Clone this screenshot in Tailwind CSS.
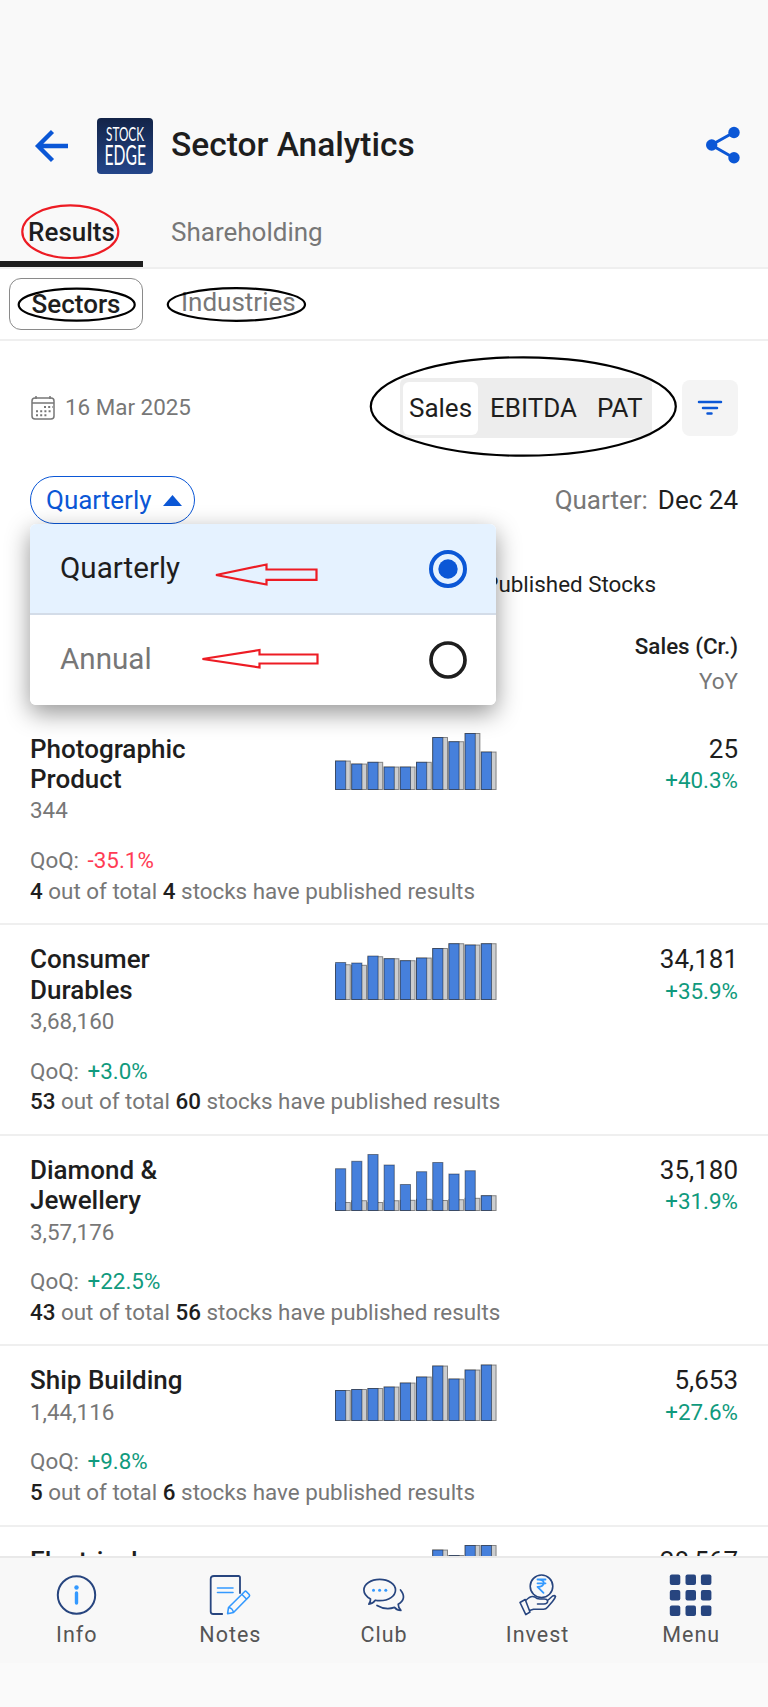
<!DOCTYPE html>
<html lang="en">
<head>
    <meta charset="UTF-8">
    <meta name="viewport" content="width=device-width, initial-scale=1.0">
    <title>Sector Analytics</title>
    <script src="https://cdn.jsdelivr.net/npm/@tailwindcss/browser@4"></script>
</head>
<body class="relative flex flex-col h-[1707px] overflow-hidden bg-white font-['Roboto',sans-serif] text-[#1e1e1e]">
    <!-- Header: back button, logo, title, share -->
    <header class="shrink-0 bg-[#f9f9f9] border-b-2 border-[#efefef] pt-[118px] h-[269px]">
        <div class="flex items-center h-14 pl-[34px] pr-[26px]">
            <svg class="w-9 h-9" viewBox="0 0 36 36" fill="none" stroke="#0b57d6" stroke-width="4.3"><path d="M34 18H5M18.500 3.500L4 18l14.500 14.500"/></svg>
            <svg class="ml-[27px] w-14 h-14" viewBox="0 0 56 56">
                <defs><linearGradient id="logo" x1="0" y1="0" x2="0" y2="1"><stop offset="0" stop-color="#132448"/><stop offset="1" stop-color="#24468a"/></linearGradient></defs>
                <rect width="56" height="56" rx="4" fill="url(#logo)"/>
                <g fill="#fff" font-family="Lato, sans-serif">
                    <text x="9" y="22.500" font-size="19.500" textLength="38" lengthAdjust="spacingAndGlyphs">STOCK</text>
                    <text x="7.500" y="46.500" font-size="27" textLength="41.500" lengthAdjust="spacingAndGlyphs">EDGE</text>
                </g>
            </svg>
            <h1 class="ml-[18px] pb-px text-[33.500px] font-medium">Sector Analytics</h1>
            <svg class="ml-auto mb-[2px] w-9 h-[38px]" viewBox="0 0 36 38" fill="#0b57d6">
                <path d="M27.600 6.500L5.300 19l22.300 12.700" fill="none" stroke="#0b57d6" stroke-width="3"/>
                <circle cx="5.700" cy="19" r="5.700"/><circle cx="28" cy="6.500" r="5.700"/><circle cx="28" cy="31.700" r="5.700"/>
            </svg>
        </div>
        <nav class="flex h-[93px] text-[26px] leading-[117px]">
            <a class="w-[143px] h-[93px] text-center font-medium border-b-[6px] border-[#1e1e1e]">Results</a>
            <a class="ml-7 text-[#777]">Shareholding</a>
        </nav>
    </header>

    <!-- Sub tabs -->
    <div class="shrink-0 flex items-center h-[72px] pl-[9px] border-b-2 border-[#efefef] text-[26px]">
        <a class="w-[134px] h-[52px] leading-[51px] border border-[#8a8a8a] rounded-xl text-center font-medium">Sectors</a>
        <a class="ml-[38px] pb-[3px] text-[#777]">Industries</a>
    </div>

    <main class="flex-1 overflow-hidden">
        <!-- Date, metric switch, filter -->
        <div class="flex items-center pt-[37px] pl-[30px] pr-[30px]">
            <svg class="w-[26px] h-[26px]" viewBox="0 0 26 26" fill="none" stroke="#777" stroke-width="1.500">
                <rect x="2" y="3" width="22" height="21" rx="3"/><path d="M2 8h22M6 1v3M20 1v3"/>
                <path d="M14 12h9M6 16.200h16M6 20.300h12" stroke-width="2" stroke-dasharray="2 2.200"/>
            </svg>
            <span class="ml-[9px] text-[22.400px] text-[#777]">16 Mar 2025</span>
            <div class="ml-auto flex items-center w-[252px] h-[60px] p-[3px] rounded-md bg-[#ededed] text-[26px]">
                <span class="w-[75px] h-[53px] leading-[52px] text-center bg-white rounded-md">Sales</span>
                <span class="ml-[12px] pt-px">EBITDA</span>
                <span class="ml-[20px] pt-px">PAT</span>
            </div>
            <button class="ml-[30px] w-14 h-14 rounded-lg bg-[#f4f4f4]">
                <svg class="w-14 h-14" viewBox="0 0 56 56" fill="none" stroke="#0b57d6" stroke-width="2.500" stroke-linecap="round"><path d="M17 22h22M21 28h14M25.500 33.500h4"/></svg>
            </button>
        </div>

        <!-- Period selector -->
        <div class="relative mt-[38px] flex items-center justify-between h-12 px-[30px] text-[26px]">
            <button class="flex items-center h-12 w-[165px] pl-[15px] border border-[#0b57d6] rounded-full text-[#0b57d6]">Quarterly
                <svg class="ml-[11px] w-[19px] h-[11px]" viewBox="0 0 19 11"><path d="M0 11L9.500 0 19 11z" fill="#0b57d6"/></svg>
            </button>
            <div><span class="text-[#777]">Quarter:</span><span class="ml-[10px]">Dec 24</span></div>
            <!-- Dropdown menu -->
            <div class="absolute z-10 left-[30px] top-12 w-[466px] h-[181px] rounded-md overflow-hidden bg-white text-[29.600px]">
                <div class="flex items-center justify-between h-[91px] px-[30px] bg-[#e5f2ff] border-b-2 border-[#d3dce8]">Quarterly
                    <svg class="-mr-px w-[38px] h-[38px]" viewBox="0 0 38 38"><circle cx="19" cy="19" r="17" fill="none" stroke="#0b57d6" stroke-width="4"/><circle cx="19" cy="19" r="9.700" fill="#0b57d6"/></svg>
                </div>
                <div class="flex items-center justify-between h-[90px] px-[30px] text-[#777]"><span class="pb-px">Annual</span>
                    <svg class="-mr-px w-[38px] h-[38px]" viewBox="0 0 38 38"><circle cx="19" cy="19" r="17" fill="none" stroke="#1e1e1e" stroke-width="3.700"/></svg>
                </div>
            </div>
            <div class="absolute left-[30px] top-12 w-[466px] h-[181px] rounded-md shadow-[0_8px_24px_rgba(0,0,0,0.42)]"></div>
        </div>
        <div class="mt-[45px] h-[30px] leading-[30px] pr-28 text-right text-[22.400px]">Published Stocks</div>
        <div class="mt-[30px] h-[85.500px] pr-[30px] text-right text-[22.400px] leading-[35px]">
            <div class="font-medium">Sales (Cr.)</div>
            <div class="text-[#777]">YoY</div>
        </div>

        <!-- Sector rows, filled by the script below -->
        <div id="rows"></div>
    </main>

    <!-- Bottom navigation -->
    <footer class="relative shrink-0 h-[151px] bg-[#fafafa]">
        <nav class="grid grid-cols-5 h-[107px] pt-[15px] bg-[#f8f8f8] border-t-2 border-[#e9e9e9] text-[21.500px] leading-[33px] tracking-[1px] text-[#555]">
            <a class="flex flex-col items-center">
                <svg class="w-11 h-11" viewBox="0 0 44 44"><circle cx="21.500" cy="22" r="18.700" fill="none" stroke="#27457f" stroke-width="2"/><circle cx="21.500" cy="14.500" r="2.200" fill="#3399ff"/><path d="M21.500 20v10" stroke="#3399ff" stroke-width="3.400" stroke-linecap="round"/></svg>
                <span class="mt-px">Info</span>
            </a>
            <a class="flex flex-col items-center">
                <svg class="w-11 h-11" viewBox="0 0 44 44" fill="none" stroke-width="1.800" stroke-linecap="round" stroke-linejoin="round">
                    <path d="M32 20V4.500Q32 3 30.500 3H6Q2.700 3 2.700 6v32.500q0 2.500 2.500 2.500h9" stroke="#27457f"/>
                    <path d="M9.500 15h15.500M9.500 19.500h15.500M19.600 40.700l.9-6.200L36.500 18.700q1-1 2 0l2.700 2.800q.8 1 0 2L25.500 39.500zM34 21.500l4.700 4.700M20.500 34.500q4 .5 5 5" stroke="#3399ff" stroke-width="1.600"/>
                </svg>
                <span class="mt-px">Notes</span>
            </a>
            <a class="flex flex-col items-center">
                <svg class="w-11 h-11" viewBox="0 0 44 44" fill="none" stroke="#27457f" stroke-width="1.700" stroke-linecap="round" stroke-linejoin="round">
                    <path d="M8.500 26C4.500 23.800 1.900 20.500 1.900 17c0-6 7-10.600 15.800-10.600S33.500 11 33.500 17 26.800 27.700 17.800 27.700q-2.500 0-4.500-.5-2.500 3.500-6.500 4 2-2.500 1.700-5.200z"/>
                    <path d="M38.500 17c4.500 5.500 4 10.500-2.300 14.200q0 3.300 2.700 6.200-4 0-6.400-3-9 3-17.500-2"/>
                    <g fill="#3399ff" stroke="none"><circle cx="11.500" cy="17.300" r="1.500"/><circle cx="17.600" cy="17.300" r="1.500"/><circle cx="23.800" cy="17.300" r="1.500"/></g>
                </svg>
                <span class="mt-px">Club</span>
            </a>
            <a class="flex flex-col items-center">
                <svg class="w-11 h-11" viewBox="0 0 44 44" fill="none" stroke="#27457f" stroke-width="1.600" stroke-linejoin="round" stroke-linecap="round">
                    <circle cx="25.500" cy="13.300" r="11.300"/>
                    <path d="M21.500 6.500h8M21.500 10.300h8M21.500 6.500c8.500-.5 8.500 7.500 0 7.300l6 6" stroke="#3399ff" stroke-width="1.800"/>
                    <path d="M4 29.500l5.200-3L14 39l-4.200 2.600zM9.800 27.500q5-5.500 9-3.500 2 2 5 2h4.500q2.500 0 3.300 1.500l5-4.500q2-1 2.900.5-.5 2-3 5l-5 5.800q-1.500 2-4 2H17.500l-4 1.200M21.500 31h6.500q3.500 0 3.700-3"/>
                </svg>
                <span class="mt-px">Invest</span>
            </a>
            <a class="flex flex-col items-center">
                <svg class="w-11 h-11" viewBox="0 0 44 44" fill="#27457f">
                    <rect x=".8" y="1.500" width="10.500" height="10.500" rx="2"/><rect x="16.500" y="1.500" width="10.500" height="10.500" rx="2"/><rect x="31.900" y="1.500" width="10.500" height="10.500" rx="2"/>
                    <rect x=".8" y="17" width="10.500" height="10.500" rx="2"/><rect x="16.500" y="17" width="10.500" height="10.500" rx="2"/><rect x="31.900" y="17" width="10.500" height="10.500" rx="2"/>
                    <rect x=".8" y="32.500" width="10.500" height="10.500" rx="2"/><rect x="16.500" y="32.500" width="10.500" height="10.500" rx="2"/><rect x="31.900" y="32.500" width="10.500" height="10.500" rx="2"/>
                </svg>
                <span class="mt-px">Menu</span>
            </a>
        </nav>
    </footer>

    <!-- Hand-drawn callouts over the page -->
    <svg class="absolute inset-0 z-20 w-[768px] h-[1707px] pointer-events-none" viewBox="0 0 768 1707" fill="none" stroke="#000" stroke-width="2.200">
        <ellipse cx="70.300" cy="231.700" rx="48" ry="26.300" stroke="#ed1c24"/>
        <ellipse cx="76.700" cy="304.700" rx="58" ry="16"/>
        <ellipse cx="236.400" cy="304.500" rx="68.600" ry="16.300"/>
        <ellipse cx="523.300" cy="406.500" rx="152.500" ry="49.200"/>
        <path d="M216 575l50.500-10.500v5h50v10.300h-50v4.700zM202.500 659l57-9v4.500h58v9h-58v4z" stroke="#ed1c24"/>
    </svg>

    <script>
        // blue = current bars, grey = comparison bars (same as blue when omitted), in px
        const rows = [
            { name: 'Photographic<br>Product', cap: '344', value: '25', yoy: '+40.3%', qoq: '-35.1%', out: 4, total: 4,
              blue: [29, 26, 27.7, 23, 23, 27.7, 52.5, 48.3, 56.5, 38] },
            { name: 'Consumer<br>Durables', cap: '3,68,160', value: '34,181', yoy: '+35.9%', qoq: '+3.0%', out: 53, total: 60,
              blue: [37.5, 37, 44, 41.3, 39.3, 42, 51.5, 56.3, 55, 56.3], grey: [35.3, 34.7, 43.3, 41.3, 39.3, 42, 51.5, 56.3, 55, 56.3] },
            { name: 'Diamond &amp;<br>Jewellery', cap: '3,57,176', value: '35,180', yoy: '+31.9%', qoq: '+22.5%', out: 43, total: 56,
              blue: [42.3, 49.7, 56.5, 46, 26.5, 39.3, 48.5, 37, 40.3, 15.3], grey: [8.5, 10.3, 8.5, 10.3, 10.7, 11.7, 10.5, 11.3, 12.7, 15.3] },
            { name: 'Ship Building', cap: '1,44,116', value: '5,653', yoy: '+27.6%', qoq: '+9.8%', out: 5, total: 6,
              blue: [30.5, 31.5, 32.5, 34, 38, 44, 55, 42, 51, 56] },
            { name: 'Electrical', cap: '', value: '28,567', yoy: '', qoq: '', out: '', total: '',
              blue: [34, 36, 37, 38, 39, 42, 52, 46.5, 56.5, 56.5] },
        ];

        function bar(x, w, h, fill) {
            return `<rect x="${x.toFixed(1)}" y="${57 - h}" width="${w}" height="${h - 0.5}" fill="${fill}" stroke="#000" stroke-opacity=".42"/>`;
        }

        function chart(row) {
            const grey = row.grey || row.blue;
            return row.blue.map((h, i) => bar(0.5 + i * 16.2, 14.8, grey[i], '#cbcdcf') + bar(0.5 + i * 16.2, 10.2, h, '#4680dc')).join('');
        }

        document.getElementById('rows').innerHTML = rows.map(r => `
            <div class="relative px-[30px] pt-[19px] pb-[16.4px] border-b-2 border-[#efefef]">
                <div class="flex justify-between leading-[30.4px] text-[26px]">
                    <div class="font-medium">${r.name}</div>
                    <div class="text-right">${r.value}<div class="text-[22.4px] leading-[33px] h-0 text-[#109a7d]">${r.yoy}</div></div>
                </div>
                <svg class="absolute left-[335px] top-[18px] w-[162px] h-[57px]" viewBox="0 0 162 57">${chart(r)}</svg>
                <div class="text-[22.4px] leading-8 text-[#777]">${r.cap}</div>
                <div class="mt-[18.6px] text-[22.4px] leading-[30.9px] text-[#777]">QoQ: <span class="ml-[3px] ${r.qoq[0] === '-' ? 'text-[#ff3b54]' : 'text-[#109a7d]'}">${r.qoq}</span></div>
                <div class="text-[22.4px] leading-[30.9px] text-[#777]"><b class="font-medium text-[#1e1e1e]">${r.out}</b> out of total <b class="font-medium text-[#1e1e1e]">${r.total}</b> stocks have published results</div>
            </div>`).join('');
    </script>
</body>
</html>
